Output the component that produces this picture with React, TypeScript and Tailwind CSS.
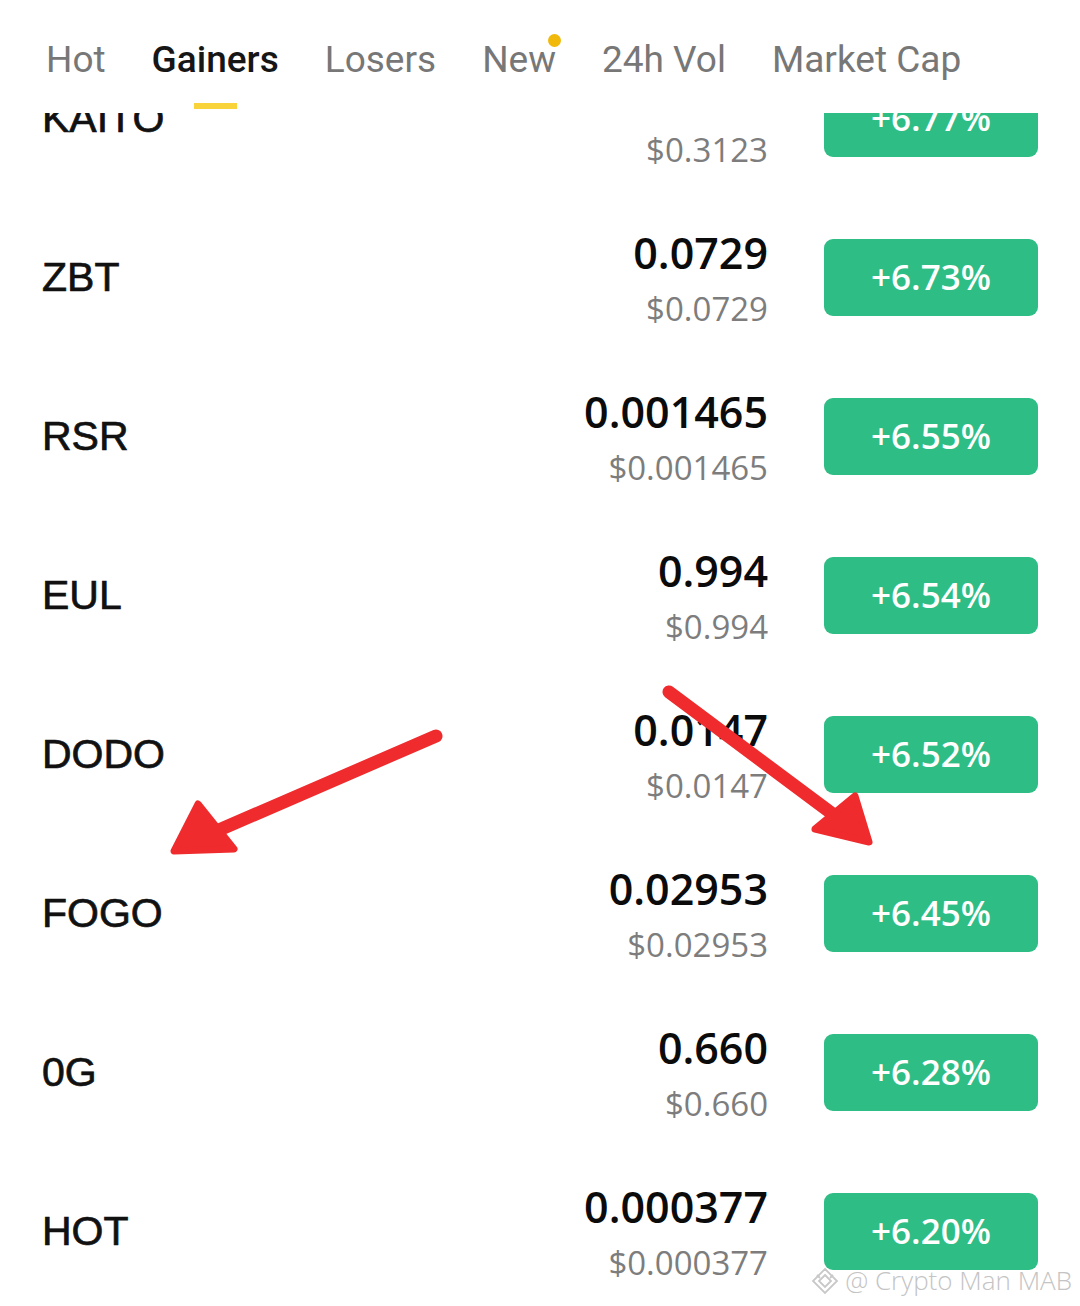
import React from 'react';

interface Row {
    name: string;
    price: string;
    usd: string;
    change: string;
}

const rows: Row[] = [
    { name: 'KAITO', price: '0.3123', usd: '$0.3123', change: '+6.77%' },
    { name: 'ZBT', price: '0.0729', usd: '$0.0729', change: '+6.73%' },
    { name: 'RSR', price: '0.001465', usd: '$0.001465', change: '+6.55%' },
    { name: 'EUL', price: '0.994', usd: '$0.994', change: '+6.54%' },
    { name: 'DODO', price: '0.0147', usd: '$0.0147', change: '+6.52%' },
    { name: 'FOGO', price: '0.02953', usd: '$0.02953', change: '+6.45%' },
    { name: '0G', price: '0.660', usd: '$0.660', change: '+6.28%' },
    { name: 'HOT', price: '0.000377', usd: '$0.000377', change: '+6.20%' },
];

const tabs = ['Hot', 'Gainers', 'Losers', 'New', '24h Vol', 'Market Cap'];

const MarketRow: React.FC<{ row: Row }> = ({ row }) => (
    <div className="h-[159px] flex items-center px-[42px]">
        <div className="flex-1 text-[41px] text-[#111] font-['Liberation_Sans',Arial,sans-serif] [-webkit-text-stroke:0.7px_#111]">{row.name}</div>
        <div className="flex flex-col items-end pt-[6px] font-['Open_Sans',sans-serif]">
            <div className="leading-[50px] text-[43px] font-semibold text-[#0b0b0b]">{row.price}</div>
            <div className="mt-[6px] leading-[50px] text-[33px] text-[#7d7d7d]">{row.usd}</div>
        </div>
        <div className="ml-[56px] w-[214px] h-[77px] rounded-[9px] bg-[#2ebd85] flex items-center justify-center text-white text-[35px] font-semibold font-['Open_Sans',sans-serif]">
            {row.change}
        </div>
    </div>
);

export default function App() {
    return (
        <div className="relative w-[1080px] h-[1306px] bg-white overflow-hidden flex flex-col">
            <div className="h-[113px] shrink-0 bg-white">
                <div className="flex items-start gap-[46px] pl-[46px] pt-[38px] font-['Roboto',sans-serif] text-[37px] leading-[44px]">
                    {tabs.map(t => (
                        <div key={t} className="flex flex-col items-center">
                            <span className={`relative ${t === 'Gainers' ? 'text-[#161616] font-medium' : 'text-[#777]'}`}>
                                {t}
                                {t === 'New' && <span className="absolute -right-[5px] -top-[4px] w-[13px] h-[13px] rounded-full bg-[#f0b90b]" />}
                            </span>
                            {t === 'Gainers' && <span className="mt-[21px] w-[43px] h-[6px] bg-[#f8d33a]" />}
                        </div>
                    ))}
                </div>
            </div>
            <div className="flex-1 overflow-hidden">
                <div className="-mt-[74px]">
                    {rows.map(r => <MarketRow key={r.name} row={r} />)}
                </div>
            </div>

            {/* red annotation arrows */}
            <svg className="absolute inset-0 pointer-events-none" width="1080" height="1306" viewBox="0 0 1080 1306">
                <g fill="#ef2b2d" stroke="#ef2b2d" strokeLinecap="round" strokeLinejoin="round">
                    <line x1="436" y1="736" x2="212" y2="833" strokeWidth="13" />
                    <polygon points="174,851 198,804 234,849" strokeWidth="7" />
                    <line x1="669" y1="692" x2="838" y2="818" strokeWidth="13" />
                    <polygon points="869,842 815,829 855,796" strokeWidth="7" />
                </g>
            </svg>

            {/* watermark */}
            <div className="absolute right-[8px] bottom-[6px] flex items-center gap-[6px] text-[#c4c4c4] font-['Open_Sans',sans-serif] text-[26px] font-light">
                <svg width="28" height="28" viewBox="0 0 28 28" fill="none" stroke="#c8c8c8" strokeWidth="1.8">
                    <path d="M14 2 L26 14 L14 26 L2 14 Z" />
                    <path d="M14 8 L20 14 L14 20 L8 14 Z" />
                    <path d="M6 8 L9 11 M22 8 L19 11" />
                </svg>
                <span>@ Crypto Man MAB</span>
            </div>
        </div>
    );
}
